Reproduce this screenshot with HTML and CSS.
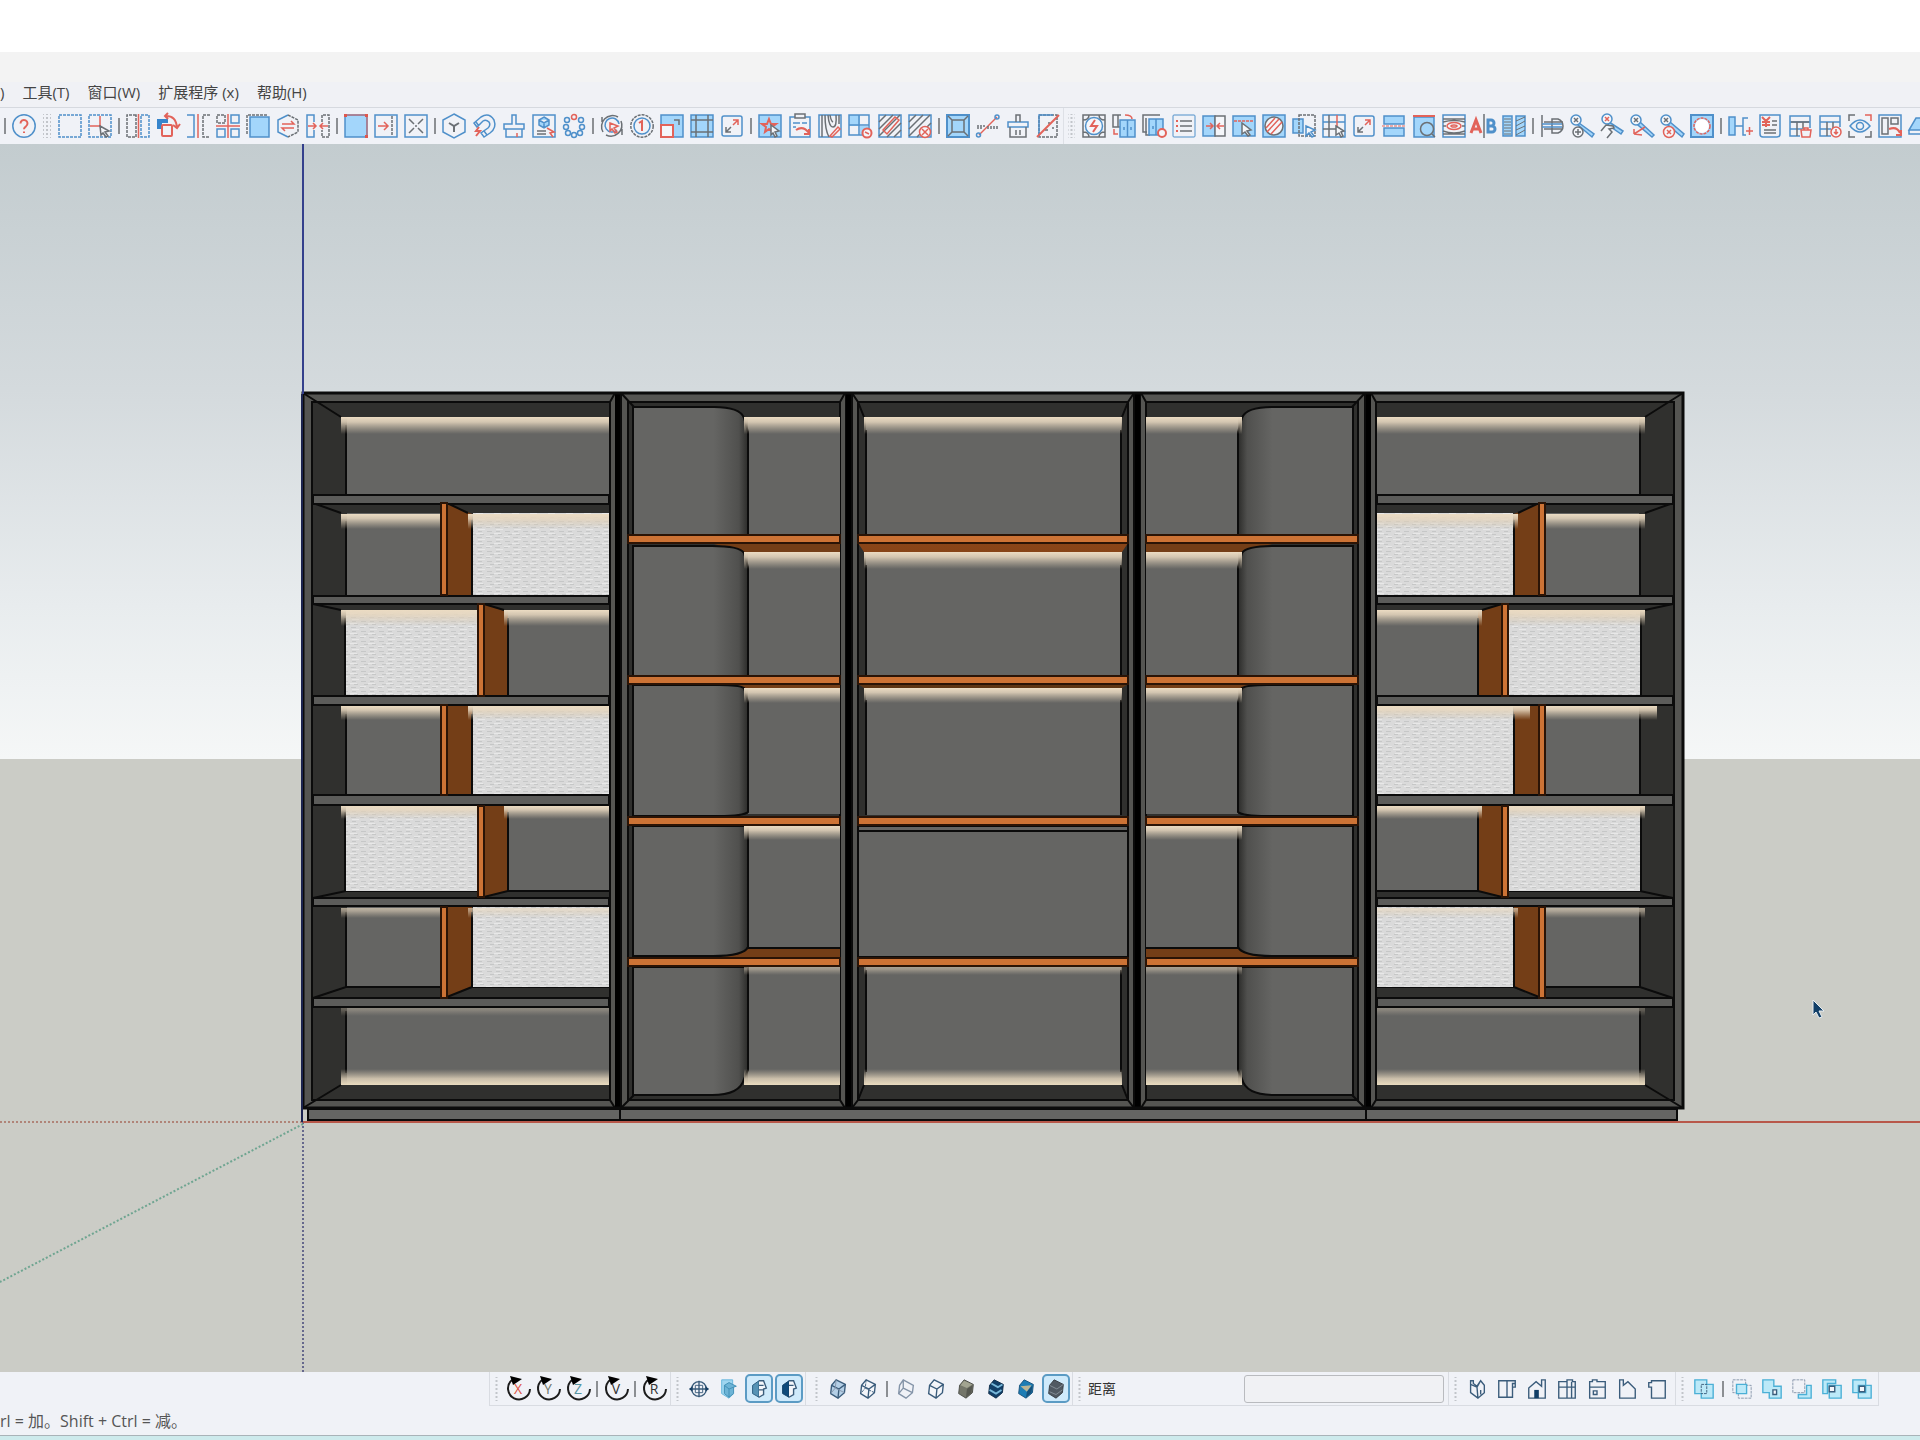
FILE: index.html
```html
<!DOCTYPE html>
<html lang="zh-CN">
<head>
<meta charset="utf-8">
<title>书柜模型</title>
<link rel="stylesheet" href="styles.css">
</head>
<body>
<div class="app">
<div class="blank"></div>
<header class="titlebar"></header>
<nav class="menu">
<button class="cut">)</button><button>工具(T)</button><button>窗口(W)</button><button>扩展程序 (x)</button><button>帮助(H)</button>
</nav>
<div class="toolbars">
<div class="bar">
<i class="sep"></i>
<button class="tool" aria-label="帮助"><svg viewBox="0 0 24 24"><circle class="b" cx="12" cy="12" r="11.2"/><path class="r w2" d="M8.5 9.5a3.5 3.5 0 1 1 5.500 2.800q-2 1.200-2 3M12 17.500v1.500"/></svg></button>
<i class="grip"></i>
<button class="tool" aria-label="选框"><svg viewBox="0 0 24 24"><path class="b dash" d="M1 1h22v22H1z"/></svg></button>
<button class="tool" aria-label="点选"><svg viewBox="0 0 24 24"><path class="b dash" d="M1 1h22v22H1z"/><path class="r" d="M12 2v11M2 12h11"/><path class="g fw" d="m12 12 9 5-4 1 3 4-2 1-3-4-2 2z"/></svg></button>
<i class="sep"></i>
<button class="tool" aria-label="对齐"><svg viewBox="0 0 24 24"><path class="g dash" d="M10 1H1v22h9z"/><path class="b dash" d="M15 1h8v22h-8z"/><path class="r" d="M12.500 0v24"/></svg></button>
<button class="tool" aria-label="旋转复制"><svg viewBox="0 0 24 24"><path class="fb" d="M1 5h11v4H6v6H1z"/><rect class="r w2" x="6" y="11" width="10" height="11" rx="1"/><path class="r w2" d="M9 2q11-1 12 12m-4-3 4 3 3-4M12-1 9 2l3 3"/></svg></button>
<button class="tool" aria-label="镜像"><svg viewBox="0 0 24 24"><path class="b" d="M1 1h7v22H1"/><path class="r" d="M12 0v24"/><path class="g dash" d="M24 1h-7v22h7"/></svg></button>
<button class="tool" aria-label="阵列"><svg viewBox="0 0 24 24"><path class="g dash" d="M1 1h8v8H1z"/><path class="b" d="M15 1h8v8h-8zM1 15h8v8H1zM15 15h8v8h-8z"/><path class="r" d="M12 0v24M0 12h24"/></svg></button>
<button class="tool" aria-label="偏移"><svg viewBox="0 0 24 24"><path class="g dash" d="M1 20V1h21"/><path class="b fl" d="M4 3h19v20H4z"/></svg></button>
<button class="tool" aria-label="替换"><svg viewBox="0 0 24 24"><path class="b" d="M12 1 2 6v12l10 5"/><path class="g dash" d="m12 1 10 5v12l-10 5"/><path class="r" d="M6 10h12l-3-3M18 14H6l3 3"/></svg></button>
<button class="tool" aria-label="合并"><svg viewBox="0 0 24 24"><path class="b" d="M8 8V1H1v22h7v-7"/><path class="g dash" d="M16 8V1h7v22h-7v-7"/><path class="r" d="M2 12h8M7 9l3 3-3 3M22 12h-8m3-3-3 3 3 3"/></svg></button>
<i class="sep"></i>
<button class="tool" aria-label="面"><svg viewBox="0 0 24 24"><path class="b fl" d="M1 1h22v22H1z"/><path class="r thin" d="M1 1h22v22"/><path class="fr" d="M0 0h3v3H0zM21 0h3v3h-3zM21 21h3v3h-3z"/></svg></button>
<button class="tool" aria-label="推拉"><svg viewBox="0 0 24 24"><path class="b" d="M1 1h22v22H1z"/><path class="g dash" d="M18 2v20"/><path class="r" d="M4 12h10m-4-4 4 4-4 4"/></svg></button>
<button class="tool" aria-label="交叉"><svg viewBox="0 0 24 24"><path class="b" d="M1 1h22v22H1z"/><path class="g" d="m5 5 5 5m4 4 5 5M19 5l-5 5m-4 4-5 5M11 12h2"/></svg></button>
<i class="sep"></i>
<button class="tool" aria-label="组件"><svg viewBox="0 0 24 24"><path class="b" d="m12 0 11 6v12l-11 6L1 18V6z"/><path class="g w2" d="m7 9 5 3 5-3m-5 3v6"/></svg></button>
<button class="tool" aria-label="吸附"><svg viewBox="0 0 24 24"><path class="b" d="m2 9 7-6q8-5 13 3 3 8-4 13l-6 4-3-4 7-5q3-3 1-6-3-3-6-1l-6 6zM4 8l3 4M12 17l3 4"/><path class="r w2" d="m7 13-3 4h4l-4 5"/></svg></button>
<button class="tool" aria-label="清理"><svg viewBox="0 0 24 24"><path class="b" d="M10 1h4v9h8v5H2v-5h8zM4 15v8h16v-8"/><path class="r" d="M15 19v4"/></svg></button>
<button class="tool" aria-label="组件库"><svg viewBox="0 0 24 24"><path class="b" d="M1 1h22v22H1z"/><path class="b fl" d="m12 3 5 3v5l-5 3-5-3V6zM7 6l5 3 5-3M12 9v5"/><path class="g" d="M5 17h9M5 20h9"/><path class="r" d="m15 14 7 4-4 1 3 4"/></svg></button>
<button class="tool" aria-label="环形阵列"><svg viewBox="0 0 24 24"><circle class="r" cx="12" cy="3" r="2.500"/><g class="b"><circle cx="5" cy="6" r="2.500"/><circle cx="19" cy="6" r="2.500"/><circle cx="4" cy="13" r="2.500"/><circle cx="20" cy="13" r="2.500"/><circle cx="6" cy="19" r="2.500"/><circle cx="18" cy="19" r="2.500"/><circle cx="12" cy="21" r="2.500"/></g></svg></button>
<i class="sep"></i>
<button class="tool" aria-label="旋转选择"><svg viewBox="0 0 24 24"><path class="g" d="M3 18A11 11 0 0 1 18 3M21 7A11 11 0 0 1 6 21M2 3v5M22 15v6"/><path class="b" d="M17 16a7 7 0 1 1 2-6"/><path class="r" d="m10 9 8 3-4 2 3 4-2 1-3-4-2 2z"/></svg></button>
<button class="tool" aria-label="编号"><svg viewBox="0 0 24 24"><circle class="g dash" cx="12" cy="12" r="11.200"/><circle class="b" cx="12" cy="12" r="8"/><path class="r w2" d="m9 9 3-2v10"/></svg></button>
<button class="tool" aria-label="缩放"><svg viewBox="0 0 24 24"><path class="b fl" d="M1 1h22v22H1z"/><path class="r fw w2" d="M1 11h12v12H1z"/><path class="g" d="M14 6h5v5"/></svg></button>
<button class="tool" aria-label="网格"><svg viewBox="0 0 24 24"><path class="b fl" d="M1 1h22v22H1z"/><path class="g" d="M6 1v22M18 1v22M1 6h22M1 18h22"/></svg></button>
<button class="tool" aria-label="展开"><svg viewBox="0 0 24 24"><rect class="b" x="2" y="2" width="20" height="20" rx="2"/><path class="r" d="m13 11 5-5m-5 0h5v5"/><path class="g" d="m11 13-5 5m0-5v5h5"/></svg></button>
<i class="sep"></i>
<button class="tool" aria-label="收藏"><svg viewBox="0 0 24 24"><path class="b fl" d="M1 1h22v22H1z"/><path class="r w2" d="m11 5 2 5h5l-4 3 1 5-4-3-4 3 1-5-4-3h5z"/><path class="g fw" d="m13 11 8 6-4 1 2 4-2 1-2-4-2 2z"/></svg></button>
<button class="tool" aria-label="粘贴"><svg viewBox="0 0 24 24"><path class="b" d="M7 3H2v20h20V3h-5"/><path class="g" d="M7 0h10v4H7z"/><path class="b" d="M5 9h7M5 13h3M14 9h5"/><path class="r w2" d="M8 16q7-5 13 3m0-4v5h-5"/></svg></button>
<button class="tool" aria-label="木纹"><svg viewBox="0 0 24 24"><path class="b" d="M1 1h22v22H1z"/><path class="g" d="M4 1v22M7 1q0 15 4 22M10 1q1 12 5 12T18 1M12 1q1 6 3 7M21 1v9"/><path class="r" d="m12 22 8-9 2 2-8 8z"/></svg></button>
<button class="tool" aria-label="贴图"><svg viewBox="0 0 24 24"><path class="fl" d="M1 1h11v11H1zM12 12h8v8h-8z"/><path class="b" d="M1 1h20v20H1zM11 1v20M1 11h20"/><circle class="r fw w2" cx="19" cy="19" r="4.500"/><path class="r" d="m17 18 4 2"/></svg></button>
<button class="tool" aria-label="填充"><svg viewBox="0 0 24 24"><path class="b" d="M1 1h22v22H1z"/><path class="g" d="M1 8 8 1M1 15 15 1M1 22 22 1M9 23 23 9M16 23l7-7"/><path class="r" d="m5 16 12-13 4 3L9 20z"/></svg></button>
<button class="tool" aria-label="清除填充"><svg viewBox="0 0 24 24"><path class="b" d="M1 1h22v22H1z"/><path class="g" d="M1 8 8 1M1 15 15 1M1 22 22 1M9 23 23 9"/><circle class="r fw" cx="17" cy="18" r="5.500"/><path class="r" d="m14 15 6 6m0-6-6 6"/></svg></button>
<i class="sep"></i>
<button class="tool" aria-label="框"><svg viewBox="0 0 24 24"><path class="b fl w2" d="M1 1h22v22H1z"/><path class="g" d="M6 6h12v12H6zM2 2l4 4M22 2l-4 4M2 22l4-4M22 22l-4-4"/></svg></button>
<button class="tool" aria-label="曲线"><svg viewBox="0 0 24 24"><path class="r" d="M3 21 21 3"/><circle class="b" cx="2.500" cy="21" r="2"/><circle class="b" cx="21" cy="3" r="2"/><path class="g" d="M2 11v4M5 11v4M8 11v2M12 12v3M15 12v3M18 12v3M21 12v3"/></svg></button>
<button class="tool" aria-label="刷子"><svg viewBox="0 0 24 24"><path class="b" d="M2 8h20v5H2z"/><path class="g" d="M10 8V1h4v7M4 13v10h16V13M10 16v5M14 16v5"/></svg></button>
<button class="tool" aria-label="隐藏"><svg viewBox="0 0 24 24"><path class="g dash" d="M3 1h18v22H3z"/><path class="b" d="M3 23V1h14"/><path class="g" d="M12 9h2M9 16h3M16 14h2"/><path class="r w2" d="M1 23 23 1"/></svg></button>
</div>
<div class="bar second">
<i class="grip"></i>
<button class="tool" aria-label="快速"><svg viewBox="0 0 24 24"><path class="g" d="M1 1h22v22H1zM1 6q6 0 6-5M23 6q-6 0-6-5M1 18q6 0 6 5M23 18q-6 0-6 5"/><circle class="b fw" cx="12" cy="12" r="8.500"/><path class="r w2" d="m13 6-4 6h6l-4 6"/></svg></button>
<button class="tool" aria-label="柜体复制"><svg viewBox="0 0 24 24"><path class="g" d="M9 13H1V1h8M6 1v12"/><path class="b fl" d="M8 6h15v17H8z"/><path class="b" d="M15.500 6v17M12 13v3M19 13v3"/><path class="r" d="M13 1q7 0 7 4M2 15v5h4"/></svg></button>
<button class="tool" aria-label="柜体设置"><svg viewBox="0 0 24 24"><path class="g" d="M18 1H1v17h4M4 4v17h4"/><path class="b fl" d="M7 5h14v16H7z"/><path class="b" d="M14 5v16M11 12v3"/><circle class="r fw w2" cx="20" cy="19" r="4"/></svg></button>
<button class="tool" aria-label="列表"><svg viewBox="0 0 24 24"><rect class="b thin" x="1" y="1" width="22" height="22" rx="1"/><path class="r w2" d="M4 7h2M4 12h2M4 17h2"/><path class="g" d="M8 7h12M8 12h12M8 17h12"/></svg></button>
<button class="tool" aria-label="合门"><svg viewBox="0 0 24 24"><path class="b fl" d="M1 2h12v20H1z"/><path class="g fw" d="M13 2h10v20H13z"/><path class="r" d="M4 12h6M8 9l3 3-3 3M22 12h-6m2-3-3 3 3 3"/></svg></button>
<button class="tool" aria-label="选择"><svg viewBox="0 0 24 24"><path class="b fl" d="M1 2h22v20H1z"/><path class="r dash" d="M2 7h20"/><path class="g fw" d="m10 9 9 7-4 1 3 4-2 1-3-4-3 2z"/></svg></button>
<button class="tool" aria-label="剖面"><svg viewBox="0 0 24 24"><path class="b fl" d="M1 1h22v22H1z"/><circle class="g fw" cx="12" cy="12" r="9"/><path class="r" d="m4 14 9-10M5 18 17 5M9 20 20 8"/></svg></button>
<button class="tool" aria-label="复制选择"><svg viewBox="0 0 24 24"><path class="b fl" d="M1 5h10v14H1z"/><path class="g dash" d="M7 1h16v21H7z"/><path class="b fw" d="m14 12 9 4-4 2 3 4-2 1-3-4-3 3z"/></svg></button>
<button class="tool" aria-label="分格"><svg viewBox="0 0 24 24"><path class="b" d="M1 1h22v22H1zM1 8h22"/><path class="g" d="M7 1v22M1 15h13"/><path class="r" d="M15 1v12"/><path class="g fw" d="m14 12 8 5-3 1 2 4-2 1-2-4-3 2z"/></svg></button>
<button class="tool" aria-label="全屏"><svg viewBox="0 0 24 24"><rect class="b" x="2" y="2" width="20" height="20" rx="2"/><path class="r" d="m13 11 5-5m-5 0h5v5"/><path class="g" d="m11 13-5 5m0-5v5h5"/></svg></button>
<button class="tool" aria-label="横切"><svg viewBox="0 0 24 24"><path class="b fl" d="M2 2h20v8H2zM2 14h20v8H2z"/><path class="r thin dash" d="M0 12h24"/></svg></button>
<button class="tool" aria-label="查找"><svg viewBox="0 0 24 24"><path class="b fl" d="M2 3h20v20H2z"/><path class="r w2" d="M1 2h22"/><circle class="g" cx="15" cy="15" r="6.500"/><path class="g" d="m20 20 3 3"/></svg></button>
<button class="tool" aria-label="横纹"><svg viewBox="0 0 24 24"><path class="b" d="M1 1h22v22H1z"/><path class="g" d="M1 5h22M1 8q11-3 22 0M1 12h3M20 12h3M1 17q11 4 22 0M1 20h22"/><ellipse class="r" cx="12" cy="12" rx="7" ry="3.500"/><ellipse class="r" cx="12" cy="12" rx="3" ry="1"/></svg></button>
<button class="tool" aria-label="对照"><svg viewBox="0 0 24 24"><path class="r w3" d="M-1 19 4 6l5 13M1 15h6"/><path class="g" d="M12 0v24"/><path class="b w3" d="M16 6v12h4a3 3 0 0 0 0-6h-4 3a3 3 0 0 0 0-6z"/></svg></button>
<button class="tool" aria-label="纹理方向"><svg viewBox="0 0 24 24"><path class="b fl" d="M1 2h9v20H1zM14 2h9v20h-9z"/><path class="g thin" d="M2 5h7M2 8h7M2 11h7M2 14h7M2 17h7M2 20h7M14 7l9-4M14 12l9-5M14 16l9-4M14 21l9-5"/></svg></button>
<i class="sep"></i>
<button class="tool" aria-label="厚度"><svg viewBox="0 0 24 24"><path class="g" d="M2 1v22M4 8h19M4 15h19M12 5h6q5 2 5 7t-5 7h-6z"/><path class="b" d="M2 10h20M2 13h20"/></svg></button>
<button class="tool" aria-label="连接件"><svg viewBox="0 0 24 24"><path class="b fl" d="m9 9 15 11-2 3L8 11z"/><circle class="b fw" cx="6" cy="6" r="5"/><circle class="g fw" cx="8" cy="18" r="5"/><path class="g" d="m4 4 4 4m0-4L4 8M8 15v6M5 18h6"/></svg></button>
<button class="tool" aria-label="手动连接"><svg viewBox="0 0 24 24"><path class="b fl" d="m9 8 14 9-2 3-13-9z"/><circle class="b fw" cx="7" cy="5" r="5"/><path class="r" d="m5 3 4 4m0-4L5 7"/><path class="g fw" d="m1 17 5-6 7 1 1 2-5 1 3 3-5 6"/></svg></button>
<button class="tool" aria-label="替换连接"><svg viewBox="0 0 24 24"><path class="b fl" d="m10 8 14 13-2 2L8 11z"/><circle class="b fw" cx="6" cy="6" r="5"/><path class="g" d="m4 4 4 4m0-4L4 8"/><path class="r" d="M4 20l11-7M4 20v-5M4 20l8 1"/></svg></button>
<button class="tool" aria-label="删除连接"><svg viewBox="0 0 24 24"><path class="b fl" d="m10 8 14 12-2 3L8 11z"/><circle class="b fw" cx="6" cy="6" r="5"/><circle class="r fw" cx="9" cy="18" r="5.500"/><path class="g" d="m4 4 4 4m0-4L4 8"/><path class="r" d="m7 16 4 4m0-4-4 4"/></svg></button>
<button class="tool" aria-label="开孔"><svg viewBox="0 0 24 24"><path class="b fl w2" d="M1 1h22v22H1z"/><circle class="fwh" cx="12" cy="12" r="7"/><circle class="r dash" cx="12" cy="12" r="8"/></svg></button>
<i class="sep"></i>
<button class="tool" aria-label="增加"><svg viewBox="0 0 24 24"><path class="b fl" d="M1 3h6v18H1z"/><path class="b" d="M7 12h8M20 4h-5v17h3"/><path class="r" d="M18 17h7M21.500 13v8"/></svg></button>
<button class="tool" aria-label="报价"><svg viewBox="0 0 24 24"><path class="b" d="M4 1h18v19q0 3-3 3H5q-3 0-3-3V1z"/><path class="r w2" d="m4 3 4 4 4-4M8 7v6M4 8h8M4 11h8"/><path class="g" d="M14 7h5M14 11h5M6 16h12M6 19h12"/></svg></button>
<button class="tool" aria-label="删除表"><svg viewBox="0 0 24 24"><path class="b" d="M22 14V2H2v20h10M2 8h20M2 15h12"/><path class="g" d="M9 8v14M15 8v7M3 8h18"/><path class="r" d="M13 16h10l-1 7h-8zM16 16v-2h4v2"/></svg></button>
<button class="tool" aria-label="导出表"><svg viewBox="0 0 24 24"><path class="b" d="M22 13V2H2v20h11M2 8h20M2 15h11"/><path class="g" d="M9 8v14M15 8v6"/><circle class="r fw" cx="18" cy="18" r="5"/><path class="r" d="M18 15v5m-2-2 2 2 2-2"/></svg></button>
<button class="tool" aria-label="显示"><svg viewBox="0 0 24 24"><path class="g" d="M1 7V1h6M1 17v6h6M23 17v6h-6"/><path class="r" d="M17 1h6v6"/><path class="b" d="M2 12q10-12 20 0-10 12-20 0z"/><circle class="b" cx="12" cy="12" r="3.500"/></svg></button>
<button class="tool" aria-label="排版"><svg viewBox="0 0 24 24"><path class="b" d="M1 1h22v22H1z"/><path class="g" d="M4 4h6v16H4zM13 4h7v6h-7z"/><path class="r w2" d="M11 15q8-3 11 4m1-3v5h-5"/></svg></button>
<button class="tool" aria-label="板件"><svg viewBox="0 0 24 24"><path class="b fl" d="M8 4h14v12H1z"/><path class="b" d="M1 16v4h20"/><circle class="r fw w2" cx="18" cy="18" r="5"/></svg></button>
</div>
</div>

<main class="scene">
<svg viewBox="0 144 1920 1228" preserveAspectRatio="xMidYMid slice" role="img" aria-label="书柜">
<defs>
<linearGradient id="sky" x2="0" y2="1"><stop stop-color="#c3cccf"/><stop offset=".4" stop-color="#d4dadd"/><stop offset=".75" stop-color="#e8ecee"/><stop offset="1" stop-color="#f5f7f7"/></linearGradient>
<linearGradient id="glow" x2="0" y2="1"><stop stop-color="#ecdcc3"/><stop offset=".3" stop-color="#e6d6be" stop-opacity=".85"/><stop offset="1" stop-color="#cfc1aa" stop-opacity="0"/></linearGradient>
<linearGradient id="rise" x2="0" y1="1" y2="0"><stop stop-color="#eadcbf"/><stop offset=".4" stop-color="#e4d5bc" stop-opacity=".8"/><stop offset="1" stop-color="#cfc1aa" stop-opacity="0"/></linearGradient>
<linearGradient id="under" x2="0" y2="1"><stop stop-color="#8a4518"/><stop offset="1" stop-color="#5d3514"/></linearGradient>
<linearGradient id="round"><stop offset=".7" stop-color="#656563"/><stop offset=".92" stop-color="#50504e"/><stop offset="1" stop-color="#2c2c2a"/></linearGradient>
<pattern id="weave" width="18" height="10" patternUnits="userSpaceOnUse"><path fill="#dadada" d="M0 0h18v10H0z"/><path stroke="#c6c7c7" d="M1 1.500h5M10 1.500h4M4 4.500h4M12 4.500h4M0 7.500h4M9 7.500h5"/><path stroke="#e8e8e8" d="M8 3.500h7M0 6.500h6M10 9.500h7"/></pattern>
<g id="wing">
<path class="frame" d="M303 393h318v715H303z"/>
<path class="dark ln" d="M312 402h298v698H312z"/>
<path class="ln" fill="none" d="m303 393 38 24M303 1108l38-23M610 402l5-9M610 1100l5 8"/>
<path class="back" d="M347 417h262v78H347zM347 513h94v82h-94zM508 610h101v86H508zM347 706h94v89h-94zM508 806h101v85H508zM347 907h94v80h-94zM347 1007h262v78H347z"/>
<path class="ln" fill="none" d="M346 425v70M346 521v74M345 618v78M346 714v81M345 812v79M346 912v75M346 1011v62M313 503l28 10M313 604l28 6M313 898l33-7h263M313 998l33-11h263"/>
<path fill="url(#weave)" d="M473 513h136v82H473zM346 610h132v86H346zM473 706h136v89H473zM346 806h132v85H346zM473 907h136v80H473z"/>
<path class="side" d="m447 503 25 11v81h-25zM484 604l24 8v84h-24zM447 705h25v90h-25zM484 806h24v85l-24 7zM447 907h25v80l-25 11z"/>
<path class="ln" fill="none" d="M472 520v75M508 618v78M472 714v81M508 812v79l-24 6M472 912v75l-25 10M447 503l21 10M484 604l20 6"/>
<path class="shelf" d="M313 495h296v9H313zM313 596h296v8H313zM313 696h296v9H313zM313 795h296v10H313zM313 898h296v8H313zM313 998h296v9H313z"/>
<path class="face" d="M441 503h6v92h-6zM478 604h6v92h-6zM441 705h6v90h-6zM478 806h6v91h-6zM441 907h6v91h-6z"/>
<g fill="url(#glow)"><path d="M341 417h268v17H341z"/><path d="M341 514h99v15h-99zM468 514h141v15H468z"/><path d="M341 610h136v16H341zM504 610h105v16H504z"/><path d="M341 806h136v13H341zM504 806h105v13H504z"/></g>
<g fill="url(#glow)" opacity=".65"><path d="M341 908h99v10h-99zM468 908h141v10H468z"/></g>
<path fill="url(#glow)" opacity=".3" d="M341 1008h268v8H341z"/>
<path fill="url(#rise)" d="M341 1069h268v16H341z"/>
<path class="black" d="M615 393h7v715h-7z"/>
<path class="frame" d="M621 393h225v715H621z"/>
<path class="dark ln" d="M628 402h212v698H628z"/>
<path class="ln" fill="none" d="m621 393 13 14M621 1108l13-13M840 402l5-9M840 1100l5 8"/>
<path class="back" d="M748 417h92v118h-92zM748 552h92v124h-92zM748 689h92v125h-92zM748 827h92v121h-92zM748 967h92v118h-92z"/>
<path class="side" d="M710 543h130v9h-95zM730 948h110v10H706zM735 684h105v4h-95z"/>
<path class="ln" fill="none" d="M748 948h92"/>
<g class="ln" fill="url(#round)"><path d="M633 407h81q26 0 30 11l4 14v103H633z"/><path d="M633 546h79q28 0 32 7l4 14v109H633z"/><path d="M633 685h86q20 0 25 3l4 14v110q-4 4-29 4h-86z"/><path d="M633 826h115v121q-4 9-35 9h-80z"/><path d="M633 967h115v103l-4 9q-4 16-32 16h-79z"/></g>
<path class="face" d="M628 535h212v8H628zM628 676h212v8H628zM628 817h212v8H628zM628 958h212v8H628z"/>
<path fill="url(#glow)" d="M744 417h96v17h-96z"/><path fill="url(#glow)" d="M744 552h96v17h-96z"/><path fill="url(#glow)" d="M744 688h96v15h-96z"/><path fill="url(#glow)" d="M744 826h96v14h-96z"/><path fill="url(#glow)" opacity=".5" d="M744 967h96v8h-96z"/><path fill="url(#rise)" d="M744 1069h96v16h-96z"/>
</g>
</defs>
<path fill="url(#sky)" d="M0 144h1920v615H0z"/>
<path fill="#cbccc6" d="M0 759h1920v613H0z"/>
<path stroke="#66688c" stroke-width="2" stroke-dasharray="2 2" d="M303 1122v250"/>
<path stroke="#b08478" stroke-width="2" stroke-dasharray="2 2" d="M0 1122h303"/>
<path stroke="#6fa591" stroke-width="2" stroke-dasharray="2 2" d="M303 1124 0 1282"/>
<path stroke="#b8584a" stroke-width="2" d="M303 1122h1617"/>
<use href="#wing"/>
<use href="#wing" transform="translate(1986 0) scale(-1 1)"/>
<path class="black" d="M846 393h7v715h-7zM1133 393h7v715h-7z"/>
<path class="frame" d="M852 393h282v715H852z"/>
<path class="dark ln" d="M858 402h270v698H858z"/>
<path class="back" d="M866 417h255v118H866zM866 552h255v124H866zM866 688h255v127H866zM866 967h255v118H866z"/>
<path class="ln" fill="none" d="m852 393 6 9 6 15m270-24-6 9-6 15M852 1108l6-8 6-15m270 23-6-8-6-15M866 430v105M1121 430v105M866 565v111M1121 565v111M866 700v115M1121 700v115M866 970v102M1121 970v102"/>
<path class="back ln" d="M858 826h270v131H858zM858 831h270"/>
<path fill="url(#under)" d="M858 543h270l-6 9H864zM858 684h270l-6 4H864z"/>
<path class="face" d="M858 535h270v8H858zM858 676h270v8H858zM858 817h270v8H858zM858 958h270v8H858z"/>
<path fill="url(#glow)" d="M864 417h258v17H864z"/><path fill="url(#glow)" d="M864 552h258v17H864z"/><path fill="url(#glow)" d="M864 688h258v15H864z"/><path fill="url(#glow)" opacity=".5" d="M864 967h258v8H864z"/><path fill="url(#rise)" d="M864 1069h258v16H864z"/>
<path fill="url(#glow)" d="M341 706h99v14h-99zM468 706h141v14H468zM1377 706h153v14h-153zM1546 706h111v14h-111z"/>
<path class="back ln" d="M308 1109h1369v11H308zM620 1108v12M1366 1108v12"/>
<path class="thick" d="M303 393h1380v715H303z"/>
<path stroke="#34408c" stroke-width="2" d="M303 144v250"/>
<path stroke="#1c2450" stroke-width="2" d="M302 394v728"/>
<path fill="#123f68" stroke="#e8eef2" d="m1813 1000 0 15 3-3 3 6 3-1-3-6h5z"/>
</svg>
</main>

<div class="dock">
<div class="group">
<i class="grip"></i>
<button class="tool" aria-label="X 轴旋转"><svg viewBox="0 0 26 30"><use href="#turn"/><text class="tx" x="13" y="20">X</text></svg></button>
<button class="tool" aria-label="Y 轴旋转"><svg viewBox="0 0 26 30"><use href="#turn"/><text class="ty" x="13" y="20">Y</text></svg></button>
<button class="tool" aria-label="Z 轴旋转"><svg viewBox="0 0 26 30"><use href="#turn"/><text class="tz" x="13" y="20">Z</text></svg></button>
<i class="sep"></i>
<button class="tool" aria-label="V 旋转"><svg viewBox="0 0 26 30"><use href="#turn"/><text x="13" y="20">V</text></svg></button>
<i class="sep"></i>
<button class="tool" aria-label="R 旋转"><svg viewBox="0 0 26 30"><defs><g id="turn"><path fill="none" stroke="#1c1c1c" stroke-width="2" d="M7 6A11 11 0 1 0 25 15"/><path d="m5 2 12 3-9 6z"/></g></defs><use href="#turn"/><text x="13" y="20">R</text></svg></button>
</div>
<div class="group">
<i class="grip"></i>
<button class="tool" aria-label="剖切面"><svg viewBox="0 0 24 24"><g class="n"><circle cx="12" cy="12" r="8"/><path d="M2 12h20M12 3v18"/><path class="thin" d="M8 8h8v8H8z"/></g><path fill="#173f63" d="m1 12 4-3v6zM23 12l-4-3v6z"/></svg></button>
<button class="tool" aria-label="显示剖切"><svg viewBox="0 0 24 24"><path fill="#9fd6f0" stroke="#62b5dc" d="M4 2h12v16l-4 4-8-5z"/><path fill="#6db4d6" stroke="#3d8db3" d="m7 8 5-3 8 4-3 1v7l-5 4-5-4zM7 8l5 4v9M12 12l5-2"/></svg></button>
<button class="tool on" aria-label="剖切切割"><svg viewBox="0 0 24 24"><path fill="#5793b5" stroke="#27597c" d="m5 8 7-5v18l-7-4z"/><path class="n fw" d="M12 3h5l3 8-3 1v6l-5 3M12 8h5M12 13h5"/></svg></button>
<button class="tool on" aria-label="剖切填充"><svg viewBox="0 0 24 24"><path fill="#0f4b7b" stroke="#0f3f66" d="m5 8 7-5v18l-7-4z"/><path class="n fw" d="M12 3h5l3 8-3 1v6l-5 3M12 8h5"/></svg></button>
</div>
<div class="group wide">
<i class="grip"></i>
<button class="tool" aria-label="X 光"><svg viewBox="0 0 24 24"><path class="n fp" d="m10 2 10 5-1 9-7 6-8-5 1-9z"/><path class="n" d="m5 8 8 4 7-5M13 12l-1 10"/><path class="n thin pale" d="m10 2-1 9-5 6M9 11l10 5"/></svg></button>
<button class="tool" aria-label="后边线"><svg viewBox="0 0 24 24"><path class="n fw" d="m10 2 10 5-1 9-7 6-8-5 1-9zM5 8l8 4 7-5M13 12l-1 10"/><path class="n thin dash" d="m10 2-1 9-5 6M9 11l10 5"/></svg></button>
<i class="sep"></i>
<button class="tool" aria-label="线框"><svg viewBox="0 0 24 24"><path class="n pale" d="m9 2 11 6-1 8-7 6-8-5 1-9zM9 2v9l-5 6M9 11l10 5"/></svg></button>
<button class="tool" aria-label="隐藏线"><svg viewBox="0 0 24 24"><path class="n fw" d="m10 2 10 5-1 9-7 6-8-5 1-9zM5 8l8 4 7-5M13 12l-1 10"/></svg></button>
<button class="tool" aria-label="着色"><svg viewBox="0 0 24 24"><path fill="#74766a" stroke="#484a45" d="m10 2 10 5-1 9-7 6-8-5 1-9z"/><path fill="#a2a491" d="m10 3 9 4-6 4-7-3z"/><path fill="#565850" d="m13 12 6-4-1 8-6 5z"/></svg></button>
<button class="tool" aria-label="材质"><svg viewBox="0 0 24 24"><path fill="#123f68" stroke="#0e2c48" d="m10 2 10 5-1 9-7 6-8-5 1-9z"/><path stroke="#78b8da" stroke-width="2" fill="none" d="m7 6 7 4 5-3M5 13l7 4 6-4"/></svg></button>
<button class="tool" aria-label="材质着色"><svg viewBox="0 0 24 24"><path fill="#1d7db5" stroke="#16507a" d="m10 2 10 5-1 9-7 6-8-5 1-9z"/><path fill="#b9b596" d="m6 9 12-1-5 7z"/><path fill="#16507a" d="m13 15 6-7-1 8-6 5z"/></svg></button>
<button class="tool on" aria-label="单色"><svg viewBox="0 0 24 24"><path fill="#505962" stroke="#363b42" d="m10 2 10 5-1 9-7 6-8-5 1-9z"/><path stroke="#858f98" fill="none" d="m5 8 8 4 7-5M5 15l7 3 7-5"/></svg></button>
</div>
<div class="group measure">
<i class="grip"></i>
<label for="distance">距离</label>
<input id="distance" type="text">
</div>
<div class="group views">
<i class="grip"></i>
<button class="tool" aria-label="等轴"><svg viewBox="0 0 24 24"><path class="n" d="M5 3h3v3l4 3 4-6 4 5v8l-7 6-8-6zM5 7l7 3 1 12M12 10l4-7M16 13v5"/></svg></button>
<button class="tool" aria-label="俯视"><svg viewBox="0 0 24 24"><path class="n" d="M3 3h18v7h-3v11H3zM12 3v18M18 10V6h3"/></svg></button>
<button class="tool" aria-label="前视"><svg viewBox="0 0 24 24"><path class="n" d="M3 11 11 4l6 5V2h4v20H3z"/><path fill="#123f68" d="M9 13h5v9H9z"/></svg></button>
<button class="tool" aria-label="右视"><svg viewBox="0 0 24 24"><path class="n" d="M3 4h9V2h6v2h3v18H3zM3 10h18M12 4v18M17 4v18"/></svg></button>
<button class="tool" aria-label="后视"><svg viewBox="0 0 24 24"><path class="n" d="M4 4h3V2h5v2h9v18H4zM4 10h17M8 14h4v4H8z"/></svg></button>
<button class="tool" aria-label="左视"><svg viewBox="0 0 24 24"><path class="n" d="M4 2h4v6l5-4 8 8v10H4z"/></svg></button>
<button class="tool" aria-label="底视"><svg viewBox="0 0 24 24"><path class="n" d="M6 3h15v19H6V10H3V5h3z"/></svg></button>
</div>
<div class="group">
<i class="grip"></i>
<button class="tool" aria-label="实体外壳"><svg viewBox="0 0 24 24"><path class="c" d="M2 2h13v5h7v15H9v-5H2z"/><path class="n thin dash" d="M9 7h6v10H9z"/></svg></button>
<i class="sep"></i>
<button class="tool" aria-label="相交"><svg viewBox="0 0 24 24"><path class="n thin pale dash" d="M2 2h14v14H2zM8 8h14v14H8z"/><path class="c" d="M6 7h11v10H6z"/></svg></button>
<button class="tool" aria-label="联合"><svg viewBox="0 0 24 24"><path class="c" d="M2 2h12v7h8v13H9v-6H2z"/><path class="n fw" d="M13 13h4v5h-4z"/></svg></button>
<button class="tool" aria-label="减去"><svg viewBox="0 0 24 24"><path class="n thin pale dash" d="M2 2h13v14H2z"/><path class="c" d="M17 8h5v14H8v-4h9z"/></svg></button>
<button class="tool" aria-label="剪辑"><svg viewBox="0 0 24 24"><path class="c" d="M2 2h14v4H7v11H2zM9 8h13v14H9z"/><path class="n fw" d="M9 9h6v6H9z"/></svg></button>
<button class="tool" aria-label="拆分"><svg viewBox="0 0 24 24"><path class="c" d="M2 2h14v14H2zM8 8h14v14H8z"/><path class="n fw" d="M9 9h6v6H9z"/></svg></button>
</div>
</div>
<footer class="status">rl = 加。Shift + Ctrl = 减。</footer>
<div class="edge"></div>
</div>
</body>
</html>
```
FILE: styles.css
```css
* { box-sizing: border-box; }

body {
  margin: 0;
  background: #fff;
  color: #444;
  font-family: "Open Sans", "Noto Sans CJK SC", sans-serif;
  font-size: 15px;
}

.app {
  display: flex;
  flex-direction: column;
  height: 100vh;
  overflow: hidden;
}

.blank { flex: none; height: 52px; }
.titlebar { flex: none; height: 30px; background: #f3f3f3; }

.menu {
  display: flex;
  flex: none;
  height: 25px;
  align-items: flex-start;
  background: #f0f1f5;
}

button {
  border: 0;
  background: none;
  font: inherit;
  color: inherit;
}

.menu button {
  padding: 0 9px;
  line-height: 21px;
  white-space: nowrap;
}
.menu .cut { padding-left: 0; }

.toolbars {
  display: flex;
  flex: none;
  height: 37px;
  overflow: hidden;
  background: #f0f2f7;
  border-top: 1px solid #d6d9df;
}

.bar {
  display: flex;
  flex: none;
  align-items: center;
  padding-left: 1px;
}
.bar.second {
  padding-left: 0;
  border-left: 1px solid #dde0e6;
}
.bar .grip { width: 16px; }
.bar.second .grip { width: 15px; }

.tool {
  display: flex;
  flex: none;
  align-items: center;
  justify-content: center;
  width: 28px;
  height: 29px;
  margin: 0 1px;
  padding: 0;
}
.tool svg { width: 24px; height: 24px; overflow: visible; }

.sep {
  flex: none;
  width: 2px;
  height: 16px;
  margin: 0 3px;
  background: #8c8f93;
}

.grip {
  flex: none;
  width: 13px;
  height: 24px;
  background: radial-gradient(circle, #c2c5ca 1px, transparent 1px) center / 4px 4px;
  background-clip: content-box;
  padding: 0 4px;
}

.b, .r, .g, .n, .c {
  fill: none;
  stroke-width: 1.5;
}
.b { stroke: #4f90ca; }
.r { stroke: #e2635a; }
.g { stroke: #6b7075; }
.n { stroke: #3a5c7b; }
.c { stroke: #4bb0d6; fill: #bce9f8; }
.fl { fill: #a3d6fb; }
.fp { fill: #b4cfe6; }
.fb { fill: #3685cc; }
.fr { fill: #df584e; }
.fw { fill: #f4f6fa; }
.fwh { fill: #fff; }
.w2 { stroke-width: 2; }
.w3 { stroke-width: 3; }
.thin { stroke-width: 1; }
.dash { stroke-dasharray: 3 1; }
.pale { stroke: #8494a8; }

.scene { flex: 1; min-height: 0; }
.scene svg { display: block; width: 100%; height: 100%; }

.frame { fill: #555552; stroke: #0b0b0b; stroke-width: 2; }
.dark { fill: #30302e; }
.back { fill: #656563; }
.black { fill: #000; }
.shelf { fill: #5c5c5a; stroke: #0b0b0b; stroke-width: 2; }
.side { fill: #743e17; }
.face { fill: #cd7335; stroke: #2b1406; stroke-width: 2; }
.ln { stroke: #0b0b0b; stroke-width: 2; }
.thick { fill: none; stroke: #0b0b0b; stroke-width: 3; }

.dock {
  display: flex;
  flex: none;
  height: 34px;
  padding-left: 490px;
  background: #f0f2f7;
}

.group {
  display: flex;
  flex: none;
  align-items: center;
  padding-right: 1px;
  border-right: 1px solid #d9dce2;
  border-bottom: 1px solid #d9dce2;
}
.group:first-child { box-shadow: -1px 0 #d9dce2; }
.wide { padding-left: 4px; }
.views { padding-right: 3px; }

.dock .tool svg { width: 22px; height: 22px; }
.dock .group:first-child svg { width: 26px; height: 30px; }
.dock text {
  fill: #333;
  font-size: 14px;
  text-anchor: middle;
}
.dock .tx { fill: #dc5142; }
.dock .ty { fill: #6c756b; }
.dock .tz { fill: #5794a2; }

.dock .on {
  border: 2px solid #5b9bc4;
  border-radius: 5px;
  background: #cfeafb;
}

.measure label { padding-left: 2px; font-size: 14px; line-height: 32px; color: #333; }
.measure input {
  width: 200px;
  height: 28px;
  margin: 0 3px 0 128px;
  border: 1px solid #b9bbbf;
  border-radius: 3px;
  background: #f0f1f4;
}

.status {
  flex: none;
  height: 29px;
  line-height: 30px;
  background: #f0f2f7;
  color: #555;
  font-size: 16px;
  white-space: nowrap;
}

.edge {
  flex: none;
  height: 5px;
  border-top: 1px solid #a9b3b8;
  background: #cdeaec;
}
```
